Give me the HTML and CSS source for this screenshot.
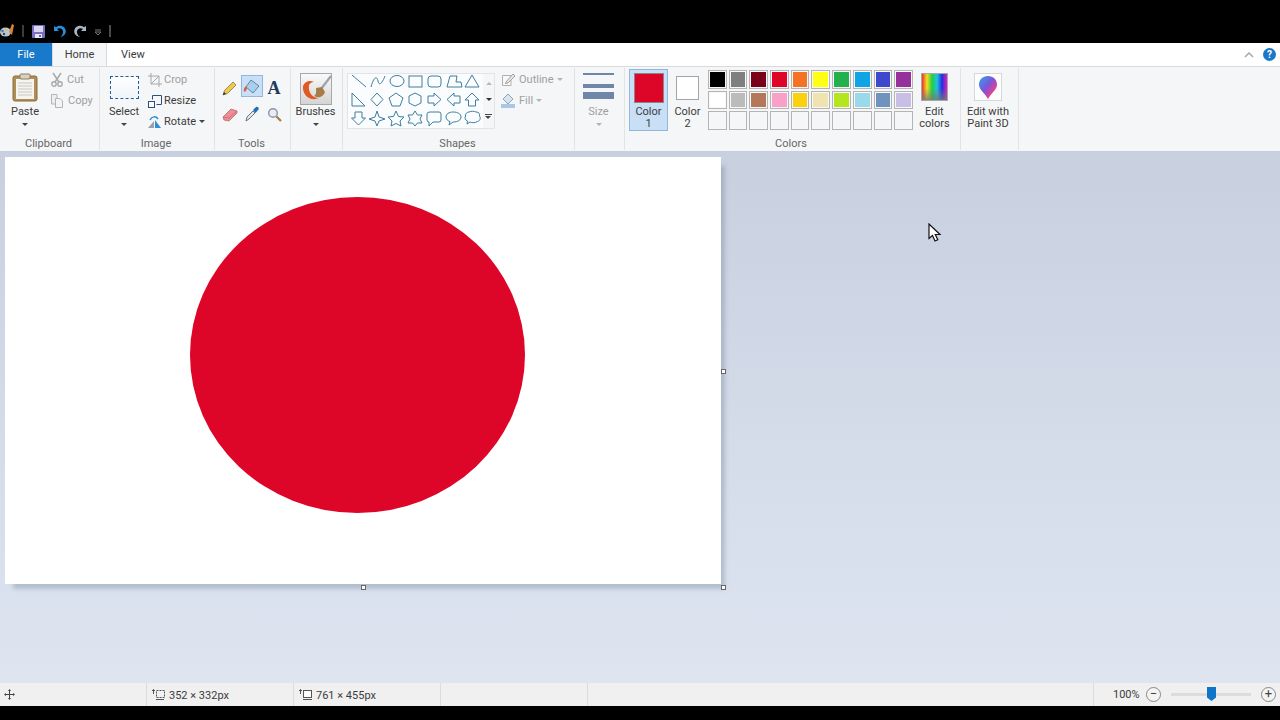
FILE: index.html
```html
<!DOCTYPE html>
<html lang="en">
<head>
  <meta charset="UTF-8" />
  <title>Untitled - Paint</title>
  <link rel="stylesheet" href="styles.css">
</head>
<body>
  <div class="titlebar">
    <svg class="qat-app" width="15" height="15" viewBox="0 0 15 15">
      <ellipse cx="5.500" cy="9" rx="5.500" ry="4.500" fill="#b9c6cf"/>
      <circle cx="2.500" cy="8" r="1.300" fill="#3a7bc8"/>
      <circle cx="6" cy="7" r="1.200" fill="#e0c040"/>
      <circle cx="4" cy="11" r="1.200" fill="#444"/>
      <path d="M9 9 L12 1 L14 2 L12 12 Z" fill="#d8843c"/>
    </svg>
    <span class="qat-sep"></span>
    <svg class="qat-icon" width="13" height="13" viewBox="0 0 13 13">
      <rect width="13" height="13" rx="1" fill="#7b6fc4"/>
      <rect x="2" y="1" width="9" height="6" fill="#d9d6f0"/>
      <rect x="3" y="9" width="7" height="4" fill="#e8e8f0"/>
      <rect x="7" y="10" width="2" height="2" fill="#6a5fb0"/>
    </svg>
    <svg class="qat-icon" width="13" height="13" viewBox="0 0 13 13">
      <path d="M1 1 V6 H6 L4 4 C7 2 10.500 4 10 7.500 C9.700 9.500 8.500 11 7 12 C10.500 11.500 12.800 9 12.800 6.500 C12.800 2 7.500 -1 3 2.200 Z" fill="#2a8fd8"/>
    </svg>
    <svg class="qat-icon" width="13" height="13" viewBox="0 0 13 13">
      <path d="M12 1 V6 H7 L9 4 C6 2 2.500 4 3 7.500 C3.300 9.500 4.500 11 6 12 C2.500 11.500 0.200 9 0.200 6.500 C0.200 2 5.500 -1 10 2.200 Z" fill="#a9b6c4"/>
    </svg>
    <svg class="qat-drop" width="7" height="7" viewBox="0 0 7 7">
      <path d="M0 1 H6 M0 3 H6 L3 6 Z" fill="none" stroke="#777" stroke-width="1"/>
    </svg>
    <span class="qat-sep qat-sep-end"></span>
  </div>

  <div class="tabs">
    <div class="tab tab-file">File</div>
    <div class="tab tab-home">Home</div>
    <div class="tab tab-view">View</div>
    <div class="tabs-right">
      <svg width="10" height="6" viewBox="0 0 10 6"><path d="M1 5 L5 1 L9 5" fill="none" stroke="#a8a8a8" stroke-width="1.500"/></svg>
      <div class="help">?</div>
    </div>
  </div>

  <div class="ribbon">
    <section class="group group-clipboard">
      <div class="group-body">
        <div class="big-btn paste">
          <svg width="26" height="29" viewBox="0 0 26 29">
            <rect x="1" y="3" width="24" height="25" rx="2" fill="#b18d58" stroke="#8c6c3e"/>
            <rect x="4" y="6" width="18" height="20" fill="#f6f4ee"/>
            <path d="M6 10 H20 M6 13 H20 M6 16 H20 M6 19 H20 M6 22 H20" stroke="#c8c8c8"/>
            <rect x="8" y="1" width="10" height="5" rx="1" fill="#d8d2c2" stroke="#8c7c5e"/>
          </svg>
          <span class="big-label">Paste</span>
          <span class="caret"></span>
        </div>
        <div class="small-list small-list-clip">
          <div class="small-btn off">
            <svg width="12" height="16" viewBox="0 0 12 16"><path d="M2 1 L8 10 M10 1 L4 10" stroke="#a9a9a9" stroke-width="1.500"/><circle cx="3" cy="12" r="2.200" fill="none" stroke="#a9a9a9" stroke-width="1.400"/><circle cx="9" cy="12" r="2.200" fill="none" stroke="#a9a9a9" stroke-width="1.400"/></svg>
            <span>Cut</span>
          </div>
          <div class="small-btn off">
            <svg width="14" height="16" viewBox="0 0 14 16"><path d="M1.500 1.500 H7 V11 H1.500 Z" fill="#eee" stroke="#b4b4b4"/><path d="M5.500 5.500 H10 L12.500 8 V14.500 H5.500 Z" fill="#f4f4f4" stroke="#b4b4b4"/></svg>
            <span>Copy</span>
          </div>
        </div>
      </div>
      <div class="group-label">Clipboard</div>
    </section>

    <section class="group group-image">
      <div class="group-body">
        <div class="big-btn select">
          <div class="select-box"></div>
          <span class="big-label">Select</span>
          <span class="caret"></span>
        </div>
        <div class="small-list">
          <div class="small-btn off">
            <svg width="14" height="14" viewBox="0 0 14 14"><path d="M3 0 V11 H14 M0 3 H11 V14 M3 11 L11 3" fill="none" stroke="#a8a8a8"/></svg>
            <span>Crop</span>
          </div>
          <div class="small-btn">
            <svg width="14" height="14" viewBox="0 0 14 14"><rect x="0.500" y="7.500" width="6" height="6" fill="#fff" stroke="#2c4f7c"/><path d="M4.500 5.500 V1.500 H13.500 V10.500 H8.500" fill="none" stroke="#2c4f7c"/></svg>
            <span>Resize</span>
          </div>
          <div class="small-btn">
            <svg width="14" height="14" viewBox="0 0 14 14"><path d="M0 13 L6 6 V13 Z" fill="#9aa0a8"/><path d="M7 13 V5 L13 13 Z" fill="#2d8fd5"/><path d="M2 5 C4 1 8 1 10 4" fill="none" stroke="#2d8fd5" stroke-width="1.500"/></svg>
            <span>Rotate</span>
            <span class="caret caret-inline"></span>
          </div>
        </div>
      </div>
      <div class="group-label">Image</div>
    </section>

    <section class="group group-tools">
      <div class="group-body tool-grid">
        <div class="tool">
          <svg width="16" height="16" viewBox="0 0 16 16"><path d="M1 15 L2.500 10.500 L11 2 L14 5 L5.500 13.500 Z" fill="#eec94e" stroke="#7c6a30" stroke-width="0.700"/><path d="M1 15 L2 12 L4 14 Z" fill="#333"/></svg>
        </div>
        <div class="tool tool-on">
          <svg width="18" height="17" viewBox="0 0 18 17"><path d="M8 2 L16 8 L10 15 L3 9 Z" fill="#a8d0ee" stroke="#5a87aa"/><path d="M4 8 C1 9 0 12 1.500 14 C3.500 13 4 11 4 8 Z" fill="#e2574a"/></svg>
        </div>
        <div class="tool tool-text">A</div>
        <div class="tool">
          <svg width="17" height="15" viewBox="0 0 17 15"><path d="M1 10 L9 2 L15 4 L15 6 L7 14 L2 13 Z" fill="#ee8e94" stroke="#b06068" stroke-width="0.700"/><path d="M1 10 L7 11 L15 4" fill="none" stroke="#c9646c" stroke-width="0.700"/></svg>
        </div>
        <div class="tool">
          <svg width="15" height="16" viewBox="0 0 15 16"><path d="M1 15 L2 11 L8 5 L10 7 L4 13 Z" fill="#dfe8ee" stroke="#555" stroke-width="0.800"/><path d="M8 4 L11 1 C12.500 0 14.500 2 13.500 3.500 L10.500 7 Z" fill="#1e6fb5"/></svg>
        </div>
        <div class="tool">
          <svg width="15" height="15" viewBox="0 0 15 15"><circle cx="6" cy="6" r="4.300" fill="#e6eef4" stroke="#8a96a2" stroke-width="1.400"/><path d="M9.500 9.500 L14 14" stroke="#a8794c" stroke-width="2.200"/></svg>
        </div>
      </div>
      <div class="group-label">Tools</div>
    </section>

    <section class="group group-brushes">
      <div class="group-body">
        <div class="big-btn brushes">
          <svg width="32" height="32" viewBox="0 0 32 32">
            <defs>
              <linearGradient id="brushBg" x1="0" y1="0" x2="0" y2="1"><stop offset="0" stop-color="#fafafa"/><stop offset="1" stop-color="#d4d4d4"/></linearGradient>
            </defs>
            <rect x="0.500" y="0.500" width="31" height="31" fill="url(#brushBg)" stroke="#a8a8a8"/>
            <path d="M3 13 C2 22 10 29 19 25 C12 25 8 19 9 12 C11 9 13 9 14 9 C10 7 5 8 3 13 Z" fill="#e05a24"/>
            <path d="M31 3 L21 16" stroke="#9aa4ac" stroke-width="2.200"/>
            <path d="M16 15 L22 14 L25 19 C23 25 17 25 14 23 C17 21 16 18 16 15 Z" fill="#a67c48"/>
          </svg>
          <span class="big-label">Brushes</span>
          <span class="caret"></span>
        </div>
      </div>
      <div class="group-label group-label-empty"></div>
    </section>

    <section class="group group-shapes">
      <div class="group-body">
        <div class="gallery">
          <svg class="gallery-shapes" width="135" height="55" viewBox="-1 1 135 55" fill="#fafcfe" stroke="#3d7f9e" stroke-width="1">
            <path d="M3 2 L17 14" fill="none"/>
            <path d="M22 14 C25 3 28 3 29 8 C30 13 33 11 36 3" fill="none"/>
            <ellipse cx="48" cy="8" rx="7" ry="5.500"/>
            <rect x="60" y="3" width="13" height="11"/>
            <rect x="79" y="3" width="13" height="11" rx="3"/>
            <path d="M98 14 L101 3 H108 L107 9 H112 L113 14 Z"/>
            <path d="M123 2 L130 14 H116 Z"/>
            <path d="M3 20 L16 33 H3 Z"/>
            <path d="M28 20 L34 26.500 L28 33 L22 26.500 Z"/>
            <path d="M47 20 L54 25 L51 33 H43 L40 25 Z"/>
            <path d="M66 20 L72 23 V30 L66 33 L60 30 V23 Z"/>
            <path d="M79 23 H85 V20 L92 26.500 L85 33 V30 H79 Z"/>
            <path d="M111 23 H105 V20 L98 26.500 L105 33 V30 H111 Z"/>
            <path d="M123 20 L130 27 H126.500 V33 H119.500 V27 H116 Z"/>
            <path d="M6 39 H13 V45 H16.500 L9.500 52 L2.500 45 H6 Z"/>
            <path d="M28 38 L30 44 L36 46 L30 48 L28 53 L26 48 L20 46 L26 44 Z"/>
            <path d="M47 38 L49.500 43.500 L55 44 L51 48 L52 53 L47 50.500 L42 53 L43 48 L39 44 L44.500 43.500 Z"/>
            <path d="M66 38 L68.500 42 L73 42 L71 46 L73 50 L68.500 50 L66 53 L63.500 50 L59 50 L61 46 L59 42 L63.500 42 Z"/>
            <path d="M81 39 H90 Q92 39 92 41 V47 Q92 49 90 49 H84 L80 53 V49 Q78 49 78 47 V41 Q78 39 81 39 Z"/>
            <path d="M104 39 C109 39 112 41 112 44 C112 47 109 49 104 49 L100 52 L101 48.500 C99 48 97 46.500 97 44 C97 41 100 39 104 39 Z"/>
            <path d="M120 39 C122 38 125 38 127 39 C130 39 131 41 130.500 43 C132 45 131 48 128.500 48.500 C126 50 123 50 121 49 L118 51 L118.500 48 C116 47 115.500 45 116.500 43 C116 41 118 39 120 39 Z"/>
          </svg>
          <div class="gallery-scroll">
            <span class="arrow-up"></span>
            <span class="arrow-down"></span>
            <span class="arrow-more"></span>
          </div>
        </div>
        <div class="shape-opts">
          <div class="small-btn off">
            <svg width="15" height="15" viewBox="0 0 15 15"><path d="M1.500 3.500 H10 V13.500 H1.500 Z" fill="#f8f8f8" stroke="#b0b0b0"/><path d="M5 10 L12 2 L14 4 L7 11 L4.500 11.500 Z" fill="#e8e8e8" stroke="#a0a0a0"/></svg>
            <span>Outline</span>
            <span class="caret caret-inline caret-off"></span>
          </div>
          <div class="small-btn off">
            <svg width="15" height="15" viewBox="0 0 15 15"><path d="M7 1 L12 6 L7 11 L2 6 Z" fill="#d8e4ee" stroke="#8aa6bc"/><rect x="0" y="11" width="14" height="4" fill="#a8c8e4"/></svg>
            <span>Fill</span>
            <span class="caret caret-inline caret-off"></span>
          </div>
        </div>
      </div>
      <div class="group-label">Shapes</div>
    </section>

    <section class="group group-size">
      <div class="group-body">
        <div class="big-btn size off">
          <div class="size-lines">
            <div class="size-line size-1"></div>
            <div class="size-line size-2"></div>
            <div class="size-line size-3"></div>
          </div>
          <span class="big-label">Size</span>
          <span class="caret caret-off"></span>
        </div>
      </div>
      <div class="group-label group-label-empty"></div>
    </section>

    <section class="group group-colors">
      <div class="group-body">
        <div class="color-btn color-btn-on">
          <div class="color-swatch color-1"></div>
          <span class="color-label">Color<br>1</span>
        </div>
        <div class="color-btn">
          <div class="color-swatch color-2"></div>
          <span class="color-label">Color<br>2</span>
        </div>
        <div class="palette">
          <div class="cell c-black"></div>
          <div class="cell c-gray"></div>
          <div class="cell c-maroon"></div>
          <div class="cell c-red"></div>
          <div class="cell c-orange"></div>
          <div class="cell c-yellow"></div>
          <div class="cell c-green"></div>
          <div class="cell c-cyan"></div>
          <div class="cell c-indigo"></div>
          <div class="cell c-purple"></div>
          <div class="cell c-white"></div>
          <div class="cell c-silver"></div>
          <div class="cell c-brown"></div>
          <div class="cell c-pink"></div>
          <div class="cell c-gold"></div>
          <div class="cell c-cream"></div>
          <div class="cell c-lime"></div>
          <div class="cell c-sky"></div>
          <div class="cell c-steel"></div>
          <div class="cell c-lavender"></div>
          <div class="cell"></div>
          <div class="cell"></div>
          <div class="cell"></div>
          <div class="cell"></div>
          <div class="cell"></div>
          <div class="cell"></div>
          <div class="cell"></div>
          <div class="cell"></div>
          <div class="cell"></div>
          <div class="cell"></div>
        </div>
        <div class="big-btn edit-colors">
          <div class="rainbow"></div>
          <span class="color-label">Edit<br>colors</span>
        </div>
      </div>
      <div class="group-label">Colors</div>
    </section>

    <section class="group group-3d">
      <div class="group-body">
        <div class="big-btn paint3d">
          <div class="p3d-box">
            <svg width="20" height="25" viewBox="0 0 20 25">
              <defs>
                <linearGradient id="dropFill" x1="0" y1="0" x2="1" y2="1">
                  <stop offset="0" stop-color="#2fa4f0"/>
                  <stop offset="0.450" stop-color="#7b56d8"/>
                  <stop offset="0.750" stop-color="#e8408c"/>
                  <stop offset="1" stop-color="#f5a030"/>
                </linearGradient>
              </defs>
              <path d="M10 1 C15.500 1 19 5 19 9.500 C19 15 13 18 10 24 C7 18 1 15 1 9.500 C1 5 4.500 1 10 1 Z" fill="url(#dropFill)"/>
            </svg>
          </div>
          <span class="color-label">Edit with<br>Paint 3D</span>
        </div>
      </div>
      <div class="group-label group-label-empty"></div>
    </section>
  </div>

  <main class="workspace">
    <div class="canvas">
      <div class="red-ellipse"></div>
      <span class="handle handle-e"></span>
      <span class="handle handle-s"></span>
      <span class="handle handle-se"></span>
    </div>
    <svg class="pointer" width="14" height="19" viewBox="0 0 14 19">
      <path d="M1 1 V15.500 L4.500 12.500 L7 18 L9.800 16.800 L7.300 11.500 H12 Z" fill="#fff" stroke="#111" stroke-width="1.200"/>
    </svg>
  </main>

  <footer class="statusbar">
    <div class="st st-move">
      <svg width="11" height="11" viewBox="0 0 11 11"><path d="M5.500 0 L7 2 H6 V5 H9 V4 L11 5.500 L9 7 V6 H6 V9 H7 L5.500 11 L4 9 H5 V6 H2 V7 L0 5.500 L2 4 V5 H5 V2 H4 Z" fill="#444"/></svg>
    </div>
    <div class="st st-sel">
      <svg width="13" height="12" viewBox="0 0 13 12"><path d="M1.500 5 V0.500 M0 2 L1.500 0.500 L3 2" fill="none" stroke="#555"/><rect x="4.500" y="1.500" width="8" height="7" fill="none" stroke="#555" stroke-dasharray="2 1"/><path d="M4 10.500 H12" stroke="#555"/></svg>
      <span>352 × 332px</span>
    </div>
    <div class="st st-canvas">
      <svg width="13" height="12" viewBox="0 0 13 12"><path d="M1.500 5 V0.500 M0 2 L1.500 0.500 L3 2" fill="none" stroke="#555"/><rect x="4.500" y="1.500" width="8" height="7" fill="#fff" stroke="#555"/><path d="M4 10.500 H13" stroke="#555"/></svg>
      <span>761 × 455px</span>
    </div>
    <div class="st st-blank"></div>
    <div class="st st-blank2"></div>
    <div class="st-zoom">
      <span class="zoom-val">100%</span>
      <div class="zoom-btn">−</div>
      <div class="slider"><span class="slider-thumb"></span></div>
      <div class="zoom-btn">+</div>
    </div>
  </footer>
  <div class="bottom-strip"></div>
</body>
</html>
```

FILE: styles.css
```css
* { box-sizing: border-box; }
html, body { margin: 0; height: 100%; }
body {
  width: 1280px; height: 720px; overflow: hidden; background: #000;
  font-family: Roboto, "Noto Sans", sans-serif; font-size: 11px; color: #3c3c3c;
  display: flex; flex-direction: column;
}

/* title bar */
.titlebar { height: 43px; background: #000; display: flex; align-items: flex-end; padding-bottom: 5px; flex: none; overflow: hidden; }
.qat-app { flex: none; }
.qat-sep { width: 2px; height: 12px; background: #3c3c3c; margin: 0 8px 1px 7px; }
.qat-icon { margin-right: 8px; flex: none; }
.qat-drop { margin: 0 7px 2px 0; }
.qat-sep-end { margin: 0 0 1px 0; background: #4a4a4a; }

/* tabs */
.tabs { height: 23px; background: #fff; display: flex; flex: none; font-size: 11px; }
.tab { height: 23px; line-height: 24px; text-align: center; }
.tab-file { width: 52px; background: #1979ca; color: #fff; }
.tab-home { width: 55px; background: #f5f6f7; border-left: 1px solid #dadbdc; border-right: 1px solid #dadbdc; }
.tab-view { width: 52px; }
.tabs-right { margin-left: auto; display: flex; align-items: center; gap: 9px; padding-right: 4px; }
.help { width: 13px; height: 13px; border-radius: 50%; background: #1a78c8; color: #fff; font-size: 10px; font-weight: bold; line-height: 13px; text-align: center; }

/* ribbon */
.ribbon { height: 85px; background: #f5f6f7; border-top: 1px solid #dadbdc; display: flex; flex: none; }
.group { display: flex; flex-direction: column; border-right: 1px solid #e2e3e4; margin: 1px 0; flex: none; }
.group-body { display: flex; height: 67px; flex: none; }
.group-label { height: 15px; line-height: 17px; text-align: center; color: #666; padding-right: 2px; flex: none; }
.group-clipboard { width: 100px; }
.group-image { width: 115px; }
.group-tools { width: 76px; }
.group-brushes { width: 52px; }
.group-shapes { width: 232px; }
.group-size { width: 50px; }
.group-colors { width: 336px; }
.group-colors .group-label { padding-right: 3px; }
.group-3d { width: 58px; }

.big-btn { display: flex; flex-direction: column; align-items: center; }
.big-label { line-height: 14px; margin-top: 4px; white-space: nowrap; }
.caret { width: 0; height: 0; border: 3px solid transparent; border-top-color: #444; border-bottom: 0; margin-top: 4px; }
.caret-inline { margin: 0 0 0 3px; }
.caret-off { border-top-color: #b4b4b4; }
.off, .off .big-label { color: #a0a0a0; }

.small-btn { display: flex; align-items: center; height: 21px; white-space: nowrap; }
.small-btn svg { flex: none; margin-right: 3px; }
.small-list { display: flex; flex-direction: column; padding-top: 1px; }

.paste { width: 50px; padding-top: 5px; }
.paste .big-label { margin-top: 3px; }
.small-list-clip .small-btn svg { margin-right: 4px; }
.small-list-clip .small-btn:first-child { padding-left: 1px; }

.select { width: 48px; padding-top: 8px; }
.select-box { width: 29px; height: 23px; border: 1px dashed #1f5f9c; margin-bottom: 2px; background: linear-gradient(#fff, #eef4fa); }
.group-image .small-list .small-btn svg { margin-right: 2px; }

.tool-grid { display: grid; grid-template-columns: repeat(3, 22px); grid-template-rows: 26px 26px; padding: 7px 0 0 4px; height: 67px; align-content: start; }
.tool { display: flex; align-items: center; justify-content: center; }
.tool-on { background: #c9dff5; border: 1px solid #90b8dc; height: 22px; }
.tool-text { font-family: "Liberation Serif", serif; font-size: 18px; font-weight: bold; color: #1f3a5c; }

.brushes { width: 49px; padding-top: 5px; }
.brushes .big-label { margin-top: 0; }

.gallery { display: flex; width: 148px; height: 56px; margin: 5px 0 0 4px; border: 1px solid #e3e4e6; background: #fbfcfd; }
.gallery-shapes { flex: none; }
.gallery-scroll { width: 13px; display: flex; flex-direction: column; align-items: center; justify-content: space-around; padding: 2px 0; background: #f5f6f7; }
.arrow-up { width: 0; height: 0; border: 3px solid transparent; border-bottom-color: #b8b8b8; border-top: 0; }
.arrow-down { width: 0; height: 0; border: 3px solid transparent; border-top-color: #333; border-bottom: 0; }
.arrow-more { width: 7px; height: 6px; border-top: 1px solid #444; }
.arrow-more::after { content: ""; display: block; margin-top: 1px; width: 0; height: 0; border: 3.500px solid transparent; border-top-color: #444; border-bottom: 0; }
.shape-opts { display: flex; flex-direction: column; padding: 1px 0 0 6px; }

.size { width: 47px; padding-top: 5px; }
.size-lines { width: 31px; height: 28px; display: flex; flex-direction: column; }
.size-line { background: #6f86a8; flex: none; }
.size-1 { height: 2px; }
.size-2 { height: 4px; margin-top: 9px; }
.size-3 { height: 7px; margin-top: 4px; }
.size .big-label { margin-top: 4px; }

.color-btn { width: 39px; height: 62px; display: flex; flex-direction: column; align-items: center; border: 1px solid transparent; margin: 1px 0 0; padding-top: 3px; }
.color-btn-on { background: #c9dff5; border-color: #90b8dc; margin-left: 4px; }
.color-swatch { border: 1px solid #a4a4a4; flex: none; }
.color-1 { width: 30px; height: 30px; background: #dd0528; border: 1px solid #888; }
.color-2 { width: 23px; height: 24px; background: #fff; margin: 3px 0; }
.color-label { line-height: 12px; margin-top: 3px; text-align: center; white-space: nowrap; }
.palette { display: grid; grid-template-columns: repeat(10, 18.700px); grid-auto-rows: 18.700px; gap: 2px; margin: 2px 0 0 1px; height: 60px; }
.cell { border: 1px solid #b4b4b4; background: #f5f6f7; box-shadow: inset 0 0 0 1px #f8f8f8; }
.c-black { background: #000; }
.c-gray { background: #7f7f7f; }
.c-maroon { background: #7a0019; }
.c-red { background: #dd0528; }
.c-orange { background: #f57224; }
.c-yellow { background: #ffff14; }
.c-green { background: #22b14c; }
.c-cyan { background: #0fa5e4; }
.c-indigo { background: #3f48cc; }
.c-purple { background: #96319c; }
.c-white { background: #fff; }
.c-silver { background: #bbb; }
.c-brown { background: #b5775a; }
.c-pink { background: #f9a0c8; }
.c-gold { background: #fbd00f; }
.c-cream { background: #efe4b0; }
.c-lime { background: #b5e61d; }
.c-sky { background: #99d9ea; }
.c-steel { background: #7092be; }
.c-lavender { background: #c8bfe7; }

.edit-colors { width: 41px; padding-top: 5px; margin-left: 1px; }
.rainbow { width: 27px; height: 28px; border: 1px solid #a8a8a8; flex: none; background: linear-gradient(to bottom, rgba(255,255,255,0) 55%, rgba(120,120,120,0.8) 100%), linear-gradient(to right, #f03030, #f0e020, #20d040, #20c0e0, #2030e0, #e020c0); }
.edit-colors .color-label { margin-top: 5px; }

.paint3d { width: 54px; padding-top: 5px; }
.p3d-box { width: 28px; height: 28px; flex: none; background: #fdfdfd; border: 1px solid #d8d8d8; display: flex; align-items: center; justify-content: center; }
.paint3d .color-label { margin-top: 5px; }

/* work area */
.workspace { position: relative; height: 531px; flex: none; padding: 6px 0 0 5px; background: linear-gradient(#c8d0e0, #dee5f1); }
.canvas { position: relative; width: 716px; height: 427px; background: #fff; box-shadow: 6px 7px 4px -2px rgba(110,125,150,0.35); }
.red-ellipse { position: absolute; left: 185px; top: 40px; width: 335px; height: 316px; border-radius: 50%; background: #dd0528; }
.handle { position: absolute; width: 5px; height: 5px; background: #fff; border: 1px solid #666; }
.handle-e { left: 716px; top: 212px; }
.handle-s { left: 356px; top: 428px; }
.handle-se { left: 716px; top: 428px; }
.pointer { position: absolute; left: 928px; top: 72px; }

/* status bar */
.statusbar { height: 24px; background: #f0f0f0; border-top: 1px solid #e4e4e4; display: flex; flex: none; align-items: stretch; }
.st { display: flex; align-items: center; gap: 4px; border-right: 1px solid #dcdcdc; flex: none; }
.st-move { width: 147px; padding-left: 4px; }
.st-sel { width: 147px; padding-left: 5px; }
.st-canvas { width: 147px; padding-left: 5px; }
.st span { position: relative; top: 1px; }
.st-blank { width: 147px; }
.st-blank2 { width: 506px; }
.st-zoom { flex: 1; display: flex; align-items: center; padding-left: 19px; }
.zoom-val { width: 33px; }
.zoom-btn { width: 15px; height: 15px; border: 1px solid #888; border-radius: 50%; font-size: 13px; line-height: 12px; text-align: center; color: #444; background: #f4f4f4; }
.slider { position: relative; width: 80px; height: 3px; background: #dcdcdc; margin: 0 10px; }
.slider-thumb { position: absolute; left: 36px; top: -6px; width: 9px; height: 14px; background: #0f75c8; clip-path: polygon(0 0, 100% 0, 100% 75%, 50% 100%, 0 75%); }
.bottom-strip { flex: 1; background: #000; }
```
